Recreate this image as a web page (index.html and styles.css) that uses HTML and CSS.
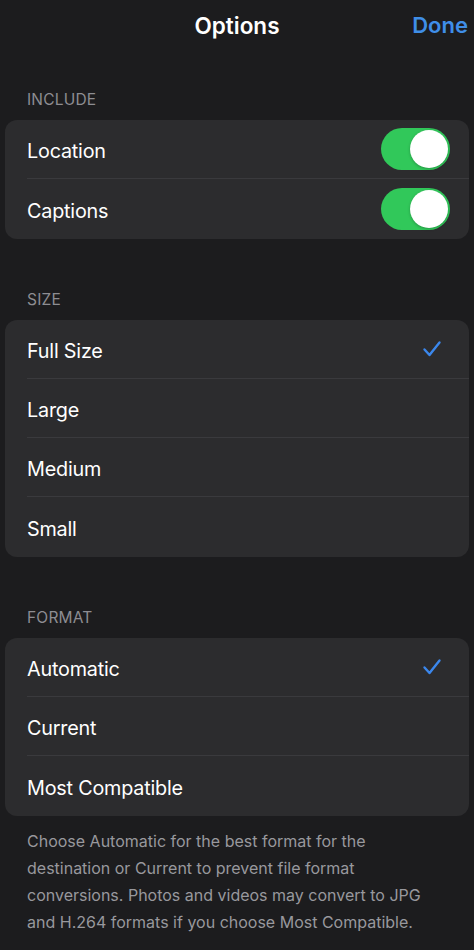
FILE: index.html
```html
<!DOCTYPE html>
<html lang="en">
<head>
  <meta charset="UTF-8">
  <title>Options</title>
  <link rel="stylesheet" href="styles.css">
</head>
<body>
<div class="navbar">
  <div></div>
  <div class="nav-title">Options</div>
  <div class="nav-done">Done</div>
</div>

<div class="section-header">INCLUDE</div>
<div class="card">
  <div class="row">
    <span class="row-label">Location</span>
    <span class="toggle on"><span class="knob"></span></span>
  </div>
  <div class="row">
    <span class="row-label">Captions</span>
    <span class="toggle on"><span class="knob"></span></span>
  </div>
</div>

<div class="section-header">SIZE</div>
<div class="card">
  <div class="row">
    <span class="row-label">Full Size</span>
    <svg class="check" width="20" height="18" viewBox="0 0 20 18"><path d="M2.5 9.5 L7.5 15 L17.5 2.5" fill="none" stroke="#3b87ec" stroke-width="2.4" stroke-linecap="round" stroke-linejoin="round"/></svg>
  </div>
  <div class="row"><span class="row-label">Large</span></div>
  <div class="row"><span class="row-label">Medium</span></div>
  <div class="row"><span class="row-label">Small</span></div>
</div>

<div class="section-header">FORMAT</div>
<div class="card">
  <div class="row">
    <span class="row-label">Automatic</span>
    <svg class="check" width="20" height="18" viewBox="0 0 20 18"><path d="M2.5 9.5 L7.5 15 L17.5 2.5" fill="none" stroke="#3b87ec" stroke-width="2.4" stroke-linecap="round" stroke-linejoin="round"/></svg>
  </div>
  <div class="row"><span class="row-label">Current</span></div>
  <div class="row"><span class="row-label">Most Compatible</span></div>
</div>
<p class="footer-note">Choose Automatic for the best format for the destination or Current to prevent file format conversions. Photos and videos may convert to JPG and H.264 formats if you choose Most Compatible.</p>
</body>
</html>
```

FILE: styles.css
```css
body {
  margin: 0;
  padding: 0;
  background: #1c1c1e;
  color: #fff;
  font-family: Inter, "Liberation Sans", sans-serif;
  width: 474px;
  height: 950px;
  overflow: hidden;
}

.navbar {
  height: 50px;
  display: grid;
  grid-template-columns: 1fr auto 1fr;
  align-items: center;
}

.nav-title {
  font-size: 22.5px;
  font-weight: 600;
}

.nav-done {
  justify-self: end;
  padding-right: 6px;
  font-size: 22px;
  font-weight: 600;
  color: #3f8ee8;
}

.section-header {
  padding: 40px 27px 10px;
  line-height: 20px;
  font-size: 15.5px;
  letter-spacing: 0.2px;
  color: #8d8d92;
}

.card + .section-header {
  padding-top: 51px;
}

.card {
  margin: 0 5px;
  background: #2c2c2e;
  border-radius: 12px;
  overflow: hidden;
}

.row {
  height: 59px;
  box-sizing: border-box;
  margin-left: 22px;
  padding-right: 19px;
  display: flex;
  align-items: center;
  justify-content: space-between;
  border-bottom: 1px solid #3a3a3d;
}

.row:last-child {
  border-bottom: none;
  height: 60px;
}

.row-label {
  padding-top: 3px;
  font-size: 19.8px;
  letter-spacing: -0.2px;
}

.check {
  margin-right: 8px;
}

.toggle {
  width: 69px;
  height: 42px;
  border-radius: 21px;
  background: #39393d;
  display: flex;
  align-items: center;
  padding: 0 2px;
  box-sizing: border-box;
}

.toggle.on {
  background: #31c85a;
  justify-content: flex-end;
}

.knob {
  width: 38px;
  height: 38px;
  border-radius: 50%;
  background: #fff;
  box-shadow: 0 1px 3px rgba(0, 0, 0, 0.25);
}

.footer-note {
  margin: 12px 0 0;
  padding: 0 47px 0 27px;
  font-size: 16px;
  line-height: 27px;
  color: #98989d;
}
```
